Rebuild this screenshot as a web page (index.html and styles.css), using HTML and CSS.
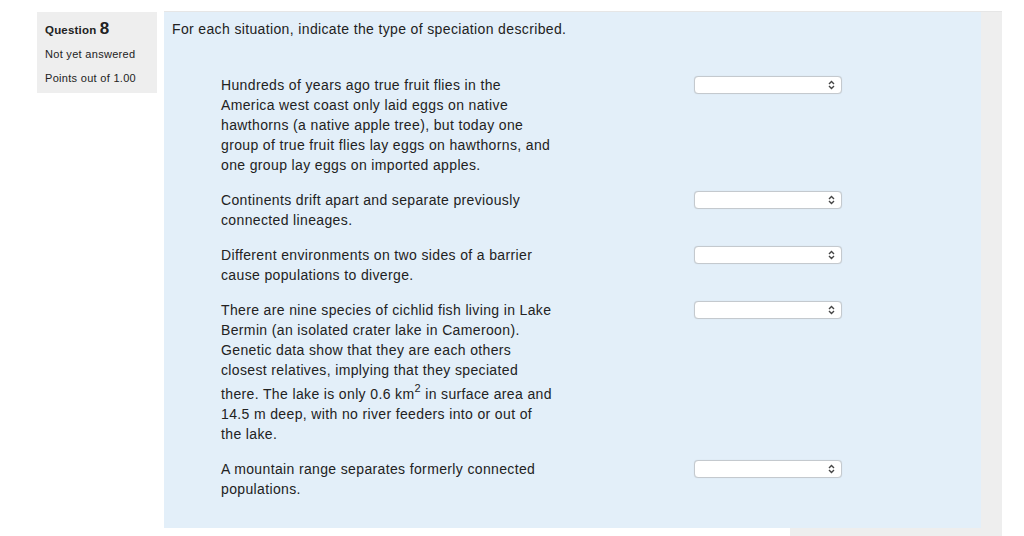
FILE: index.html
```
<!DOCTYPE html>
<html>
<head>
<meta charset="utf-8">
<link rel="stylesheet" href="styles.css">
</head>
<body>
<div class="que">
  <div class="info">
    <h3 class="no">Question <span class="qno">8</span></h3>
    <div class="state">Not yet answered</div>
    <div class="grade">Points out of 1.00</div>
  </div>
  <div class="content">
    <div class="formulation">
      <p class="qtext">For each situation, indicate the type of speciation described.</p>
      <div class="answers">
        <div class="row">
          <div class="text">Hundreds of years ago true fruit flies in the America west coast only laid eggs on native hawthorns (a native apple tree), but today one group of true fruit flies lay eggs on hawthorns, and one group lay eggs on imported apples.</div>
          <div class="select"><span class="arrows"><svg width="7" height="10" viewBox="0 0 7 10"><path d="M1 4 L3.5 1.5 L6 4 M1 6 L3.5 8.5 L6 6" fill="none" stroke="#444" stroke-width="1.4"/></svg></span></div>
        </div>
        <div class="row">
          <div class="text">Continents drift apart and separate previously connected lineages.</div>
          <div class="select"><span class="arrows"><svg width="7" height="10" viewBox="0 0 7 10"><path d="M1 4 L3.5 1.5 L6 4 M1 6 L3.5 8.5 L6 6" fill="none" stroke="#444" stroke-width="1.4"/></svg></span></div>
        </div>
        <div class="row">
          <div class="text">Different environments on two sides of a barrier cause populations to diverge.</div>
          <div class="select"><span class="arrows"><svg width="7" height="10" viewBox="0 0 7 10"><path d="M1 4 L3.5 1.5 L6 4 M1 6 L3.5 8.5 L6 6" fill="none" stroke="#444" stroke-width="1.4"/></svg></span></div>
        </div>
        <div class="row">
          <div class="text">There are nine species of cichlid fish living in Lake Bermin (an isolated crater lake in Cameroon). Genetic data show that they are each others closest relatives, implying that they speciated there. The lake is only 0.6 km<sup>2</sup> in surface area and 14.5 m deep, with no river feeders into or out of the lake.</div>
          <div class="select"><span class="arrows"><svg width="7" height="10" viewBox="0 0 7 10"><path d="M1 4 L3.5 1.5 L6 4 M1 6 L3.5 8.5 L6 6" fill="none" stroke="#444" stroke-width="1.4"/></svg></span></div>
        </div>
        <div class="row">
          <div class="text">A mountain range separates formerly connected populations.</div>
          <div class="select"><span class="arrows"><svg width="7" height="10" viewBox="0 0 7 10"><path d="M1 4 L3.5 1.5 L6 4 M1 6 L3.5 8.5 L6 6" fill="none" stroke="#444" stroke-width="1.4"/></svg></span></div>
        </div>
      </div>
    </div>
    <div class="bottom"><div class="gap"></div><div class="rest"></div></div>
  </div>
</div>
</body>
</html>
```
FILE: styles.css
```
html, body {
  margin: 0;
  padding: 0;
  background: #fff;
}
body {
  font-family: "Liberation Sans", Arial, Helvetica, sans-serif;
  color: #333;
}
.que {
  display: flex;
  align-items: flex-start;
  padding: 12px 0 0 37px;
}
.info {
  width: 120px;
  height: 81px;
  box-sizing: border-box;
  background: #eee;
  padding: 8px 0 0 8px;
  margin-right: 7px;
}
.no {
  margin: 0;
  font-size: 11.5px;
  font-weight: bold;
  line-height: 18px;
  color: #222;
  letter-spacing: 0.2px;
}
.qno {
  font-size: 17px;
}
.state, .grade {
  font-size: 11px;
  line-height: 13px;
  color: #222;
  letter-spacing: 0.3px;
}
.state {
  margin-top: 9px;
}
.grade {
  margin-top: 11px;
}
.content {
  width: 838px;
  background: #eee;
  border-top: 1px solid #e6e6e6;
  margin-top: -1px;
}
.formulation {
  background: #e3eff9;
  width: 817px;
  height: 516px;
  box-sizing: border-box;
  padding: 7px 0 0 8px;
}
.qtext {
  margin: 0;
  font-size: 14px;
  line-height: 20px;
  color: #222;
  letter-spacing: 0.36px;
}
.answers {
  padding: 36px 0 0 49px;
  display: flex;
  flex-direction: column;
  gap: 15px;
}
.row {
  display: grid;
  grid-template-columns: 473px 148px;
  align-items: start;
}
.text {
  width: 334px;
  font-size: 14px;
  line-height: 20px;
  color: #222;
  letter-spacing: 0.36px;
}
.text sup {
  font-size: 11px;
  line-height: 17px;
  vertical-align: 7px;
}
.select {
  margin-top: 1px;
  height: 18px;
  box-sizing: border-box;
  background: #fff;
  border: 1px solid #c4c9ce;
  border-radius: 4px;
  box-shadow: 0 0 1px rgba(0, 0, 0, 0.15);
  display: flex;
  justify-content: flex-end;
  align-items: center;
  padding-right: 6px;
}
.arrows {
  display: flex;
}
.bottom {
  display: flex;
  height: 8px;
}
.gap {
  width: 626px;
  background: #fff;
}
.rest {
  flex: 1;
  background: #eee;
}
```
